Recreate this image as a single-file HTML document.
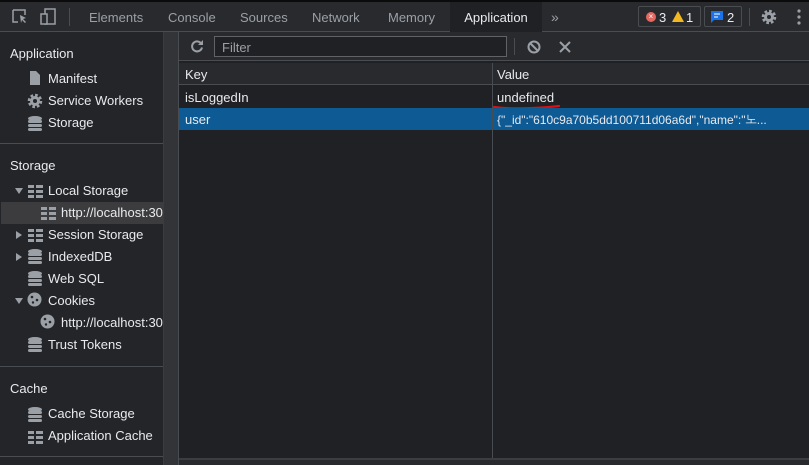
<!DOCTYPE html>
<html><head><meta charset="utf-8"><style>
*{margin:0;padding:0;box-sizing:border-box}
body{width:809px;height:465px;overflow:hidden;background:#202124;font-family:"Segoe UI","Liberation Sans","NanumGothic",sans-serif;font-size:13px;color:#e8eaed;position:relative}
.a{position:absolute}
.top{left:0;top:0;width:809px;height:2px;background:#0b0b0c}
.tabs{left:0;top:2px;width:809px;height:30px;background:#292a2d;border-bottom:1px solid #494c50}
.tab{top:1px;height:29px;line-height:29px;color:#9aa0a6;font-size:13px}
.side{left:0;top:32px;width:163px;height:433px;background:#242528}
.side .it,.side .hd{margin-top:2px}
.gut{left:163px;top:32px;width:15px;height:433px;background:#333437;border-left:1px solid #3c3c3c}
.main{left:178px;top:32px;width:631px;height:433px;background:#202124;border-left:1px solid #494c50}
.main .it{margin-top:1px}
.hd{font-size:13px;color:#e8eaed}
.it{font-size:13px;color:#e8eaed;white-space:nowrap}
.sep{height:1px;background:#494c50}
svg{position:absolute}
</style></head><body>
<div class="a top"></div>
<div class="a tabs">
 <svg style="left:12px;top:7px" width="16" height="16" viewBox="0 0 16 16"><path d="M1 1h12v5M1 1v12h5" fill="none" stroke="#9aa0a6" stroke-width="1.5"/><path d="M8 6l6 3-3 1 3 3-1 1-3-3-1 3z" fill="#9aa0a6"/></svg>
 <svg style="left:40px;top:6px" width="16" height="18" viewBox="0 0 16 18"><rect x="5" y="1" width="10" height="15" fill="none" stroke="#9aa0a6" stroke-width="1.5"/><rect x="1" y="6" width="6" height="10" fill="#292a2d" stroke="#9aa0a6" stroke-width="1.5"/></svg>
 <div class="a" style="left:69px;top:6px;width:1px;height:18px;background:#494c50"></div>
 <div class="a tab" style="left:89px">Elements</div>
 <div class="a tab" style="left:168px">Console</div>
 <div class="a tab" style="left:240px">Sources</div>
 <div class="a tab" style="left:312px">Network</div>
 <div class="a tab" style="left:388px">Memory</div>
 <div class="a tab" style="left:450px;top:0;height:30px;line-height:31px;width:92px;background:#202124;color:#e8eaed;text-align:center">Application</div>
 <div class="a tab" style="left:551px;font-size:14px">»</div>
 <div class="a" style="left:638px;top:4px;width:63px;height:21px;border:1px solid #494c50;border-radius:2px"></div>
 <div class="a" style="left:646px;top:10px;width:10px;height:10px;border-radius:50%;background:#e46962;color:#fff;font-size:8px;line-height:10px;text-align:center">×</div>
 <div class="a" style="left:659px;top:5px;line-height:21px">3</div>
 <svg style="left:672px;top:9px" width="12" height="11"><path d="M6 0L12 11H0z" fill="#f2b824"/></svg>
 <div class="a" style="left:686px;top:5px;line-height:21px">1</div>
 <div class="a" style="left:704px;top:4px;width:38px;height:21px;border:1px solid #494c50;border-radius:2px"></div>
 <svg style="left:711px;top:9px" width="12" height="12"><path d="M0 0h12v9H3l-3 3z" fill="#1a73e8"/><path d="M3 3h6M3 6h4" stroke="#fff" stroke-width="1"/></svg>
 <div class="a" style="left:727px;top:5px;line-height:21px">2</div>
 <div class="a" style="left:749px;top:6px;width:1px;height:18px;background:#494c50"></div>
 <svg style="left:761px;top:7px" width="16" height="16" viewBox="0 0 16 16"><circle cx="8" cy="8" r="5.5" fill="none" stroke="#9aa0a6" stroke-width="3.5" stroke-dasharray="2.5 1.8"/><circle cx="8" cy="8" r="5" fill="#9aa0a6"/><circle cx="8" cy="8" r="2" fill="#292a2d"/></svg>
 <svg style="left:797px;top:7px" width="4" height="16"><circle cx="2" cy="2" r="1.6" fill="#9aa0a6"/><circle cx="2" cy="8" r="1.6" fill="#9aa0a6"/><circle cx="2" cy="14" r="1.6" fill="#9aa0a6"/></svg>
</div>

<div class="a side">
 <div class="a hd" style="left:10px;top:12px">Application</div>
 <svg style="left:30px;top:39px" width="10" height="14"><path d="M0 0h6l4 4v10H0z" fill="#9aa0a6"/></svg>
 <div class="a it" style="left:48px;top:37px">Manifest</div>
 <svg style="left:27px;top:61px" width="16" height="16" viewBox="0 0 16 16"><circle cx="8" cy="8" r="5.5" fill="none" stroke="#9aa0a6" stroke-width="3.5" stroke-dasharray="2.5 1.8"/><circle cx="8" cy="8" r="5" fill="#9aa0a6"/><circle cx="8" cy="8" r="2" fill="#242528"/></svg>
 <div class="a it" style="left:48px;top:59px">Service Workers</div>
 <svg style="left:28px;top:84px" width="14" height="15"><g fill="#9aa0a6"><ellipse cx="7" cy="2.5" rx="7" ry="2.5"/><rect x="0" y="4" width="14" height="3" rx="1.5"/><rect x="0" y="8" width="14" height="3" rx="1.5"/><rect x="0" y="12" width="14" height="3" rx="1.5"/></g></svg>
 <div class="a it" style="left:48px;top:81px">Storage</div>
 <div class="a sep" style="left:0;top:111px;width:163px"></div>
 <div class="a hd" style="left:10px;top:124px">Storage</div>
 <svg style="left:15px;top:156px" width="8" height="6"><path d="M0 0h8L4 6z" fill="#9aa0a6"/></svg>
 <svg style="left:28px;top:153px" width="15" height="13"><g fill="#9aa0a6"><rect x="0" y="0" width="6" height="3"/><rect x="8" y="0" width="7" height="3"/><rect x="0" y="5" width="6" height="3"/><rect x="8" y="5" width="7" height="3"/><rect x="0" y="10" width="6" height="3"/><rect x="8" y="10" width="7" height="3"/></g></svg>
 <div class="a it" style="left:48px;top:149px">Local Storage</div>
 <div class="a" style="left:1px;top:170px;width:162px;height:22px;background:#3c3c3e"></div>
 <svg style="left:41px;top:175px" width="15" height="13"><g fill="#9aa0a6"><rect x="0" y="0" width="6" height="3"/><rect x="8" y="0" width="7" height="3"/><rect x="0" y="5" width="6" height="3"/><rect x="8" y="5" width="7" height="3"/><rect x="0" y="10" width="6" height="3"/><rect x="8" y="10" width="7" height="3"/></g></svg>
 <div class="a it" style="left:61px;top:171px;width:102px;overflow:hidden">http://localhost:3000</div>
 <svg style="left:16px;top:199px" width="6" height="8"><path d="M0 0v8l6-4z" fill="#9aa0a6"/></svg>
 <svg style="left:28px;top:197px" width="15" height="13"><g fill="#9aa0a6"><rect x="0" y="0" width="6" height="3"/><rect x="8" y="0" width="7" height="3"/><rect x="0" y="5" width="6" height="3"/><rect x="8" y="5" width="7" height="3"/><rect x="0" y="10" width="6" height="3"/><rect x="8" y="10" width="7" height="3"/></g></svg>
 <div class="a it" style="left:48px;top:193px">Session Storage</div>
 <svg style="left:16px;top:221px" width="6" height="8"><path d="M0 0v8l6-4z" fill="#9aa0a6"/></svg>
 <svg style="left:28px;top:217px" width="14" height="15"><g fill="#9aa0a6"><ellipse cx="7" cy="2.5" rx="7" ry="2.5"/><rect x="0" y="4" width="14" height="3" rx="1.5"/><rect x="0" y="8" width="14" height="3" rx="1.5"/><rect x="0" y="12" width="14" height="3" rx="1.5"/></g></svg>
 <div class="a it" style="left:48px;top:215px">IndexedDB</div>
 <svg style="left:28px;top:239px" width="14" height="15"><g fill="#9aa0a6"><ellipse cx="7" cy="2.5" rx="7" ry="2.5"/><rect x="0" y="4" width="14" height="3" rx="1.5"/><rect x="0" y="8" width="14" height="3" rx="1.5"/><rect x="0" y="12" width="14" height="3" rx="1.5"/></g></svg>
 <div class="a it" style="left:48px;top:237px">Web SQL</div>
 <svg style="left:15px;top:266px" width="8" height="6"><path d="M0 0h8L4 6z" fill="#9aa0a6"/></svg>
 <svg style="left:27px;top:260px" width="15" height="15"><circle cx="7.5" cy="7.5" r="7" fill="#9aa0a6"/><g fill="#242528"><circle cx="5" cy="5" r="1.3"/><circle cx="10" cy="8" r="1.3"/><circle cx="6" cy="10.5" r="1.2"/></g></svg>
 <div class="a it" style="left:48px;top:259px">Cookies</div>
 <svg style="left:40px;top:282px" width="15" height="15"><circle cx="7.5" cy="7.5" r="7" fill="#9aa0a6"/><g fill="#242528"><circle cx="5" cy="5" r="1.3"/><circle cx="10" cy="8" r="1.3"/><circle cx="6" cy="10.5" r="1.2"/></g></svg>
 <div class="a it" style="left:61px;top:281px;width:102px;overflow:hidden">http://localhost:3000</div>
 <svg style="left:28px;top:305px" width="14" height="15"><g fill="#9aa0a6"><ellipse cx="7" cy="2.5" rx="7" ry="2.5"/><rect x="0" y="4" width="14" height="3" rx="1.5"/><rect x="0" y="8" width="14" height="3" rx="1.5"/><rect x="0" y="12" width="14" height="3" rx="1.5"/></g></svg>
 <div class="a it" style="left:48px;top:303px">Trust Tokens</div>
 <div class="a sep" style="left:0;top:334px;width:163px"></div>
 <div class="a hd" style="left:10px;top:347px">Cache</div>
 <svg style="left:28px;top:375px" width="14" height="15"><g fill="#9aa0a6"><ellipse cx="7" cy="2.5" rx="7" ry="2.5"/><rect x="0" y="4" width="14" height="3" rx="1.5"/><rect x="0" y="8" width="14" height="3" rx="1.5"/><rect x="0" y="12" width="14" height="3" rx="1.5"/></g></svg>
 <div class="a it" style="left:48px;top:372px">Cache Storage</div>
 <svg style="left:28px;top:399px" width="15" height="13"><g fill="#9aa0a6"><rect x="0" y="0" width="6" height="3"/><rect x="8" y="0" width="7" height="3"/><rect x="0" y="5" width="6" height="3"/><rect x="8" y="5" width="7" height="3"/><rect x="0" y="10" width="6" height="3"/><rect x="8" y="10" width="7" height="3"/></g></svg>
 <div class="a it" style="left:48px;top:394px">Application Cache</div>
 <div class="a sep" style="left:0;top:424px;width:163px"></div>
</div>
<div class="a gut"></div>

<div class="a main">
 <div class="a" style="left:0;top:0;width:631px;height:29px;background:#292a2d;border-bottom:1px solid #494c50"></div>
 <svg style="left:11px;top:7px" width="14" height="14" viewBox="0 0 14 14"><path d="M11.5 5A5 5 0 1 0 12 8.5" fill="none" stroke="#9aa0a6" stroke-width="2"/><path d="M13 1v5H8z" fill="#9aa0a6"/></svg>
 <div class="a" style="left:35px;top:4px;width:293px;height:21px;border:1px solid #5f6368;background:#202124;color:#9aa0a6;padding-left:7px;line-height:21px">Filter</div>
 <div class="a" style="left:335px;top:6px;width:1px;height:17px;background:#494c50"></div>
 <svg style="left:348px;top:8px" width="14" height="14"><circle cx="7" cy="7" r="5.5" fill="none" stroke="#9aa0a6" stroke-width="2"/><path d="M3 3l8 8" stroke="#9aa0a6" stroke-width="2"/></svg>
 <svg style="left:380px;top:9px" width="12" height="12"><path d="M1 1l10 10M11 1L1 11" stroke="#9aa0a6" stroke-width="2"/></svg>
 <div class="a" style="left:0;top:31px;width:631px;height:22px;background:#292a2d;border-bottom:1px solid #494c50"></div>
 <div class="a it" style="left:6px;top:34px">Key</div>
 <div class="a it" style="left:318px;top:34px">Value</div>
 <div class="a it" style="left:6px;top:57px">isLoggedIn</div>
 <div class="a it" style="left:318px;top:57px">undefined</div>
 <svg style="left:314px;top:72px" width="70" height="6"><path d="M1 3C15 5 40 5 66 2" fill="none" stroke="#e01010" stroke-width="2.2" stroke-linecap="round"/></svg>
 <div class="a" style="left:0;top:76px;width:631px;height:22px;background:#0e5a95"></div>
 <div class="a it" style="left:6px;top:79px;color:#e8eaed">user</div>
 <div class="a it" style="left:318px;top:80px;font-size:12px">{"_id":"610c9a70b5dd100711d06a6d","name":"노...</div>
 <div class="a" style="left:313px;top:31px;width:1px;height:395px;background:#494c50"></div>
 <div class="a" style="left:0;top:426px;width:631px;height:2px;background:#3c3d40"></div>
 <div class="a" style="left:0;top:428px;width:631px;height:5px;background:#292a2d"></div>
</div>
</body></html>
